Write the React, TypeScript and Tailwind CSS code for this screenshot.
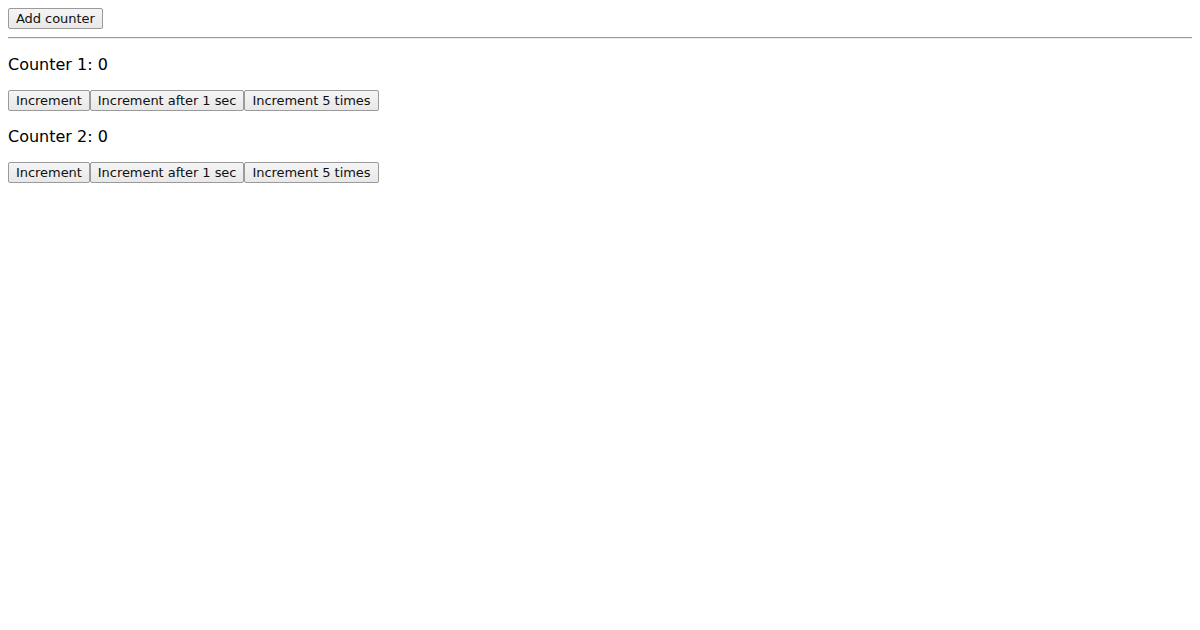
import React from "react";

const btn =
  "h-[21px] px-[7px] pt-[1px] border border-[#9a9a9a] rounded-[2px] bg-gradient-to-b from-[#f5f5f5] to-[#e8e8e8] text-[13px] tracking-[-0.05px] leading-[18px] text-[#111] align-bottom";

function Counter({ n }: { n: number }) {
  return (
    <div>
      <p className="my-4 text-base leading-[19px]">Counter {n}: 0</p>
      <div className="flex h-[21px]">
        <button className={btn}>Increment</button>
        <button className={btn}>Increment after 1 sec</button>
        <button className={btn}>Increment 5 times</button>
      </div>
    </div>
  );
}

export default function App() {
  return (
    <div
      className="min-h-[630px] bg-white p-2 text-black"
      style={{ fontFamily: '"DejaVu Sans", sans-serif' }}
    >
      <div className="flex h-[21px]">
        <button className={btn}>Add counter</button>
      </div>
      <hr className="my-2 h-0 border-t border-b border-t-[#9a9a9a] border-b-[#eeeeee]" />
      <Counter n={1} />
      <Counter n={2} />
    </div>
  );
}
